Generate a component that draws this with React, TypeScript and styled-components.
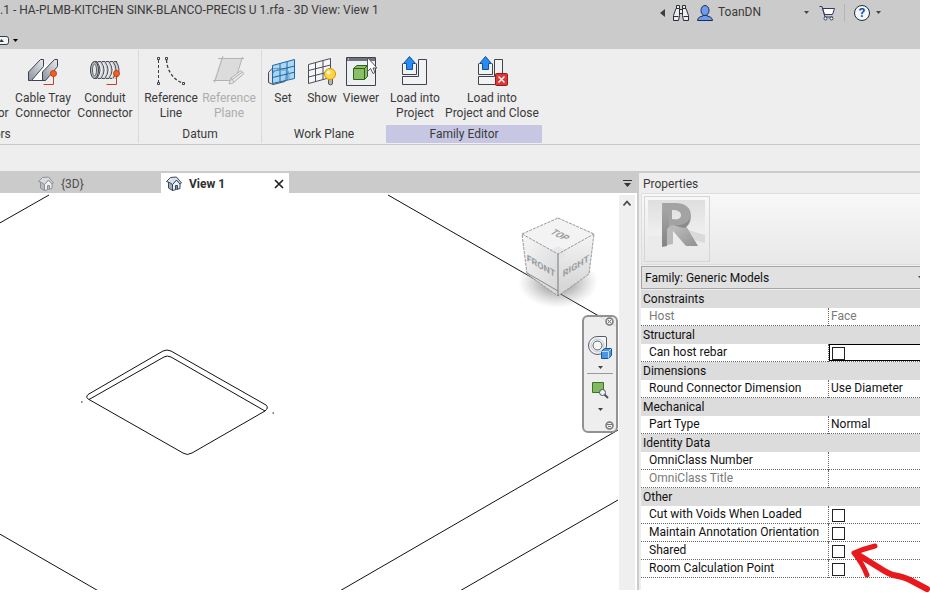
import React from 'react';
import styled, { createGlobalStyle, css } from 'styled-components';

const GlobalStyle = createGlobalStyle`
  *, *::before, *::after { box-sizing: border-box; }
  body { margin: 0; background: #fff; }
  button, input, select { font: inherit; color: inherit; }
  svg { display: block; flex: none; }
`;

/* ---------- shell ---------- */

const Shell = styled.div`
  position: relative;
  display: flex;
  flex-direction: column;
  min-height: 100vh;
  padding: 0 10px 3px 0;
  overflow: hidden;
  font: 12px/15px Roboto, "Segoe UI", sans-serif;
  color: #3a3a3a;
`;

const PlainButton = styled.button`
  display: flex;
  align-items: center;
  padding: 0;
  border: 0;
  background: none;
`;

/* ---------- title bar ---------- */

const TitleBar = styled.header`
  display: flex;
  flex-direction: column;
  background: #cbcbcb;
`;

const TitleRow = styled.div`
  display: flex;
  align-items: center;
  justify-content: space-between;
  height: 25px;
  padding-right: 39px;
`;

const WindowTitle = styled.h1`
  margin: 0;
  padding-bottom: 4px;
  font-size: 12px;
  font-weight: 400;
  white-space: nowrap;
`;

const AccountTools = styled.div`
  display: flex;
  align-items: center;
  height: 24px;
`;

const AccountButton = styled(PlainButton)`
  gap: 6px;
  margin-left: 8px;
  white-space: nowrap;
`;

const UserMenu = styled(AccountButton)`
  width: 112px;
  margin-right: 2px;
  justify-content: space-between;
`;

const UserName = styled.span`
  display: flex;
  align-items: center;
  gap: 5px;
`;

const Separator = styled.span`
  width: 1px;
  height: 18px;
  margin: 0 1px 0 8px;
  background: #b5b5b5;
`;

const QuickAccessRow = styled.div`
  display: flex;
  align-items: center;
  gap: 4px;
  height: 24px;
  padding-top: 6px;
`;

/* ---------- ribbon ---------- */

const Ribbon = styled.nav`
  display: flex;
  height: 96px;
  padding: 1px 0;
  background: #eeeeee;
  border-bottom: 1px solid #c8c8c8;
`;

const RibbonPanel = styled.section<{ $width: number; $divided?: boolean; $clipped?: boolean }>`
  display: flex;
  flex: none;
  flex-direction: column;
  justify-content: space-between;
  width: ${(p) => p.$width}px;
  ${(p) => p.$divided && css`border-right: 1px solid #d9d9d9;`}
  ${(p) => p.$clipped && css`margin-left: -178px;`}
`;

const RibbonTools = styled.div<{ $align?: string; $inset?: number }>`
  display: flex;
  justify-content: ${(p) => p.$align ?? 'center'};
  padding: 6px ${(p) => p.$inset ?? 0}px 0 0;
`;

const RibbonButton = styled.button<{ $width: number }>`
  display: flex;
  flex-direction: column;
  align-items: center;
  gap: 3px;
  width: ${(p) => p.$width}px;
  padding: 0;
  border: 0;
  background: none;
  line-height: 15px;
  white-space: nowrap;

  &:disabled { color: #adadad; }
`;

const PanelTitle = styled.h2<{ $accent?: boolean }>`
  margin: 0;
  height: 18px;
  font-size: 12px;
  font-weight: 400;
  line-height: 18px;
  text-align: center;
  background: ${(p) => (p.$accent ? '#c7c7e4' : 'transparent')};
`;

const OptionsBar = styled.div`
  height: 26px;
  background: #eeeeee;
`;

/* ---------- workspace ---------- */

const Workspace = styled.main`
  display: flex;
  flex: 1;
  background: #cbcbcb;
`;

const DocumentPane = styled.section`
  display: flex;
  flex: 1;
  flex-direction: column;
  min-width: 0;
`;

const TabStrip = styled.div`
  display: flex;
  align-items: flex-end;
  height: 22px;
  padding-right: 5px;
`;

const ViewTab = styled.div<{ $active?: boolean; $width: number }>`
  display: flex;
  align-items: center;
  width: ${(p) => p.$width}px;
  height: 20px;
  padding: 2px 5px 0 ${(p) => (p.$active ? 5 : 38)}px;
  background: ${(p) => (p.$active ? '#fff' : 'transparent')};
  color: ${(p) => (p.$active ? '#303030' : '#505050')};
  font-weight: ${(p) => (p.$active ? 700 : 400)};
`;

const TabButton = styled(PlainButton)`
  flex: 1;
  gap: 7px;
`;

const TabMenu = styled(PlainButton)`
  height: 20px;
  margin-left: auto;
`;

const CanvasArea = styled.div`
  position: relative;
  display: flex;
  flex: 1;
  background: #fff;
`;

const Drawing = styled.svg`
  flex: 1;
  min-width: 0;
  height: auto;
  align-self: stretch;
`;

const ScrollTrack = styled.div`
  width: 16px;
  margin: 2px 2px 0 0;
  padding: 5px 3px;
  background: #efefef;
`;

const CubeOverlay = styled.div`
  position: absolute;
  top: 19px;
  right: 37px;
`;

const NavigationBar = styled.div`
  position: absolute;
  top: 122px;
  right: 19px;
  display: flex;
  flex-direction: column;
  align-items: center;
  width: 36px;
  height: 118px;
  padding: 19px 0 0;
  border: 2px solid #929292;
  border-radius: 6px;
  background: rgba(236, 236, 236, 0.9);
`;

const NavCorner = styled(PlainButton)<{ $bottom?: boolean }>`
  position: absolute;
  right: 2px;
  ${(p) => (p.$bottom ? 'bottom: 1px;' : 'top: 0;')}
`;

const NavButton = styled(PlainButton)<{ $gap: number }>`
  flex-direction: column;
  gap: ${(p) => p.$gap}px;
`;

const NavRule = styled.hr`
  width: 26px;
  height: 1px;
  margin: 4px 0 8px;
  border: 0;
  background: #999;
`;

/* ---------- properties ---------- */

const PropertiesPane = styled.aside`
  flex: 0 0 281px;
  margin: 2px 0 0 2px;
  padding-left: 2px;
  overflow: hidden;
  background: #eeeeee;
`;

const PaneTitle = styled.h2`
  margin: 0;
  padding: 2px 0 0 2px;
  font-size: 12px;
  font-weight: 400;
  line-height: 18px;
`;

const TypePreview = styled.div`
  height: 72px;
  padding: 2px;
  border: 1px solid #dedede;
  border-right: 0;
  background: linear-gradient(#f8f8f8, #e8e8e8);
`;

const Thumbnail = styled.div`
  width: 66px;
  height: 66px;
  border: 1px solid #d6d6d6;
`;

const FamilyPicker = styled.div`
  position: relative;
  margin: 1px 0;
  border: 1px solid #a6a6a6;
  border-right: 0;
  background: #e1e1e1;
`;

const FamilySelect = styled.select`
  display: block;
  width: 100%;
  height: 21px;
  padding: 2px 3px 0;
  border: 0;
  appearance: none;
  background: none;
  color: #111;
`;

const PickerArrow = styled.svg`
  position: absolute;
  top: 9px;
  right: -5px;
`;

const PropertyGrid = styled.div`
  height: 100%;
  background: #fff;
`;

const Table = styled.table`
  width: 100%;
  table-layout: fixed;
  border-spacing: 0;
  color: #111;
  line-height: 17px;
`;

const NameColumn = styled.col`
  width: 187px;
`;

const GroupCell = styled.th`
  height: 18px;
  padding: 0 2px;
  background: #dcdcdc;
  font-weight: 400;
  text-align: left;
`;

const dottedBottom = css`
  height: 18px;
  border-bottom: 1px dotted #666;
`;

const NameCell = styled.th<{ $muted?: boolean }>`
  ${dottedBottom}
  padding: 0 0 0 8px;
  color: ${(p) => (p.$muted ? '#7a7a7a' : 'inherit')};
  font-weight: 400;
  text-align: left;
  white-space: nowrap;
`;

const ValueCell = styled.td<{ $muted?: boolean }>`
  ${dottedBottom}
  padding: 0;
  border-left: 1px dotted #666;
  color: ${(p) => (p.$muted ? '#7a7a7a' : 'inherit')};
`;

const ValueBox = styled.div<{ $selected?: boolean }>`
  display: flex;
  align-items: flex-end;
  height: 17px;
  padding: ${(p) => (p.$selected ? '0 2px' : '0 3px 1px')};
  border: ${(p) => (p.$selected ? '1px solid #000' : '0')};
  border-right: 0;
`;

const ValueText = styled.span`
  padding-left: 2px;
`;

const Check = styled.input`
  appearance: none;
  width: 13px;
  height: 13px;
  margin: 0;
  border: 1px solid #222;
  background: #fff;

  &:checked { background: #444; box-shadow: inset 0 0 0 2px #fff; }
`;

const MarkupArrow = styled.svg`
  position: absolute;
  right: 0;
  bottom: 0;
  pointer-events: none;
`;

/* ---------- icons ---------- */

const Caret = ({ color = '#444' }: { color?: string }) => (
  <svg width="5" height="3" viewBox="0 0 5 3"><path d="M0 0h5L2.500 3z" fill={color} /></svg>
);

const CableTrayIcon = () => (
  <svg width="32" height="32" viewBox="0 0 32 32">
    <defs>
      <linearGradient id="steel" x1="0" x2="1" y1="1" y2="0"><stop stopColor="#8b929c" /><stop offset="1" stopColor="#e8ebef" /></linearGradient>
    </defs>
    <path d="M4 24h15l8-9-6-6-7-1z" fill="#fff" />
    <path d="M1.500 16 13.500 3.500h3v7L4.500 24.500h-3z" fill="url(#steel)" stroke="#3d434d" />
    <path d="M4.500 24.500h14" stroke="#3d434d" fill="none" />
    <path d="M15.500 16 27.500 3.500h3v7L18.500 24.500h-3z" fill="url(#steel)" stroke="#3d434d" />
    <path d="M26.500 18v10.500h-10" stroke="#c0402c" fill="none" />
    <circle cx="26.500" cy="17.500" r="3" fill="#f2601f" stroke="#c23b12" />
  </svg>
);

const ConduitIcon = () => (
  <svg width="32" height="32" viewBox="0 0 32 32">
    <path d="M5 5.500h23c3 0 3 17 0 17H5z" fill="#cfd2d6" />
    {[9, 13, 17, 21, 25, 28].map((x) => (
      <path key={x} d={`M${x - 1} 5.500q6 8.500 0 17`} fill="none" stroke="#4c5058" />
    ))}
    {[11, 15, 19, 23].map((x) => (
      <path key={x} d={`M${x - 1} 7q5 7 0 14`} fill="none" stroke="#fafafa" />
    ))}
    <path d="M5 5.500h23M5 22.500h18" stroke="#4c5058" strokeDasharray="3 1" />
    <ellipse cx="5.500" cy="14" rx="4" ry="8.500" fill="#b7bbc1" stroke="#3d434d" />
    <ellipse cx="5.500" cy="14" rx="2" ry="6" fill="#e5e7ea" stroke="#5a6069" />
    <path d="M27.500 18v10.500h-10" stroke="#c0402c" fill="none" />
    <circle cx="27.500" cy="17.500" r="3" fill="#f2601f" stroke="#c23b12" />
  </svg>
);

const ReferenceLineIcon = () => (
  <svg width="32" height="32" viewBox="0 0 32 32" fill="none" stroke="#3a3d44">
    <path d="M3.500 4v22" strokeDasharray="3 2" />
    <path d="M11.500 4C12 14 18 24 28 27" strokeDasharray="3 2" strokeWidth="1.300" />
    <g fill="#fff">
      <path d="M2.500 1.500h2v2h-2zM2.500 26.500h2v2h-2zM10.500 1.500h2v2h-2zM27.500 26.500h2v2h-2z" />
    </g>
  </svg>
);

const ReferencePlaneIcon = () => (
  <svg width="32" height="32" viewBox="0 0 32 32" fill="none" stroke="#b2b2b2">
    <path d="M8 2.500h21l-7 22H1z" fill="#dcdcdc" stroke="none" />
    <path d="M5 2.500h26M10 0 1.500 26.500M29.500 1l-5 16M0 24.500h18" />
    <path d="m16 28 2-6L28 14.500l3 3L20 27z" fill="#e8e8e8" />
    <path d="m18 22 3 4M18.500 24l11-8" />
  </svg>
);

const planeGrid = 'M5.500 9.500 27.500 3.500v19l-22 5zM13 7.500v18.200M20 5.500v18.600M5.500 15.500l22-5.500M5.500 21.500l22-5.300';

const SetPlaneIcon = () => (
  <svg width="32" height="32" viewBox="0 0 32 32">
    <path d="M1.500 16.500 5 12.500h15l-2 13-12 3-4.500-2z" fill="#dfe3e8" stroke="#464c56" />
    <path d={planeGrid} fill="#8fcbf0" fillOpacity=".65" stroke="#1368b3" />
    <path d="M6 18q0-4 4-4h8q4 0 4 4v6" fill="none" stroke="#6a9cc4" />
  </svg>
);

const ShowPlaneIcon = () => (
  <svg width="32" height="32" viewBox="0 0 32 32">
    <path d="M2.500 8.500 24.500 2.500v19l-22 6zM9.500 6.700v18.800M17 4.700v18.800M2.500 14.500l22-5.500M2.500 21l22-5.500" fill="#f5f6f7" stroke="#484d57" />
    <path d="M22.500 22h4v6q-2 2-4 0z" fill="#aeb3ba" stroke="#555a62" />
    <circle cx="24" cy="18" r="5.500" fill="#ffd640" stroke="#d99213" />
    <circle cx="22.500" cy="16.500" r="2" fill="#fffbd4" />
  </svg>
);

const ViewerIcon = () => (
  <svg width="32" height="32" viewBox="0 0 32 32">
    <path d="M1.500 1.500h29v28h-29z" fill="#edeff2" stroke="#3e434c" />
    <path d="M2 2h28v3H2z" fill="#6d727c" />
    <path d="M3 3h1" stroke="#fff" />
    <path d="M8.500 12.500 12 9.500h10.500v11l-3 3h-11z" fill="#8dbd69" stroke="#276415" />
    <path d="M8.500 12.500h11v11M19.500 12.500l3-3" fill="none" stroke="#276415" />
    <path d="M22.500 1.500v14l3-3 2.500 5 2-1-2-4.500h4z" fill="#fff" stroke="#555" />
  </svg>
);

const LoadArt = () => (
  <>
    <path d="M2.500 7.500v11h14v-11M2.500 20.500h16v-17h8v25h-24z" fill="#f0f2f4" stroke="#3e434c" />
    <path d="M9.500.500 15.500 7.500h-3v6h-6v-6h-3z" fill="#2a8cf0" stroke="#0e4f9f" />
  </>
);

const LoadIcon = () => <svg width="30" height="32" viewBox="0 0 30 32"><LoadArt /></svg>;

const LoadCloseIcon = () => (
  <svg width="32" height="32" viewBox="0 0 32 32">
    <LoadArt />
    <rect x="19.500" y="17.500" width="12" height="12" rx="1" fill="#d93a38" stroke="#9c1717" />
    <path d="m22.500 20.500 6 6m0-6-6 6" stroke="#fff" strokeWidth="1.400" />
  </svg>
);

const BinocularsIcon = () => (
  <svg width="16" height="16" viewBox="0 0 16 16" fill="#eceef0" stroke="#2b2e33">
    <path d="M3.500.500h3v3h-3zM9.500.500h3v3h-3zM6.500 4.500h3v4h-3z" />
    <path d="M3 3.500h3.500v7l-1 5h-5v-5zM13 3.500H9.500v7l1 5h5v-5z" />
    <path d="M.500 11.500h5M10.500 11.500h5" />
  </svg>
);

const UserIcon = () => (
  <svg width="16" height="16" viewBox="0 0 16 16" fill="#6f9bef" stroke="#1e2c52">
    <path d="M.500 15.500c0-3 3-4 5.500-4.500v-1h4v1c2.500.500 5.500 1.500 5.500 4.500z" />
    <ellipse cx="8" cy="5.500" rx="4" ry="5" />
  </svg>
);

const CartIcon = () => (
  <svg width="17" height="16" viewBox="0 0 17 16" fill="none" stroke="#303a66">
    <path d="M3.500 3.500h12l-2 6h-8z" fill="#fff" />
    <path d="M.500 1.500h2.500l3 10.500h8" />
    <circle cx="6.500" cy="13.500" r="1.500" fill="#fff" />
    <circle cx="12.500" cy="13.500" r="1.500" fill="#fff" />
  </svg>
);

const HelpMark = styled.span`
  display: flex;
  align-items: center;
  justify-content: center;
  width: 16px;
  height: 16px;
  border: 1px solid #222b3a;
  border-radius: 50%;
  background: #f4f7fb;
  color: #1b4fb0;
  font-size: 13px;
  font-weight: 700;
  line-height: 14px;
`;

const HouseIcon = ({ faded = false }: { faded?: boolean }) => (
  <svg width="16" height="16" viewBox="0 0 16 16" fill="#eef1f4" stroke={faded ? '#8d8f92' : '#3b4656'}>
    <path d="M2.500 6v6l4 2.500V7z" fill={faded ? '#b9bbbf' : '#9fb0c3'} />
    <path d="M6.500 14.500V8l4-4 3.500 4v4.500z" />
    <path d="m.500 5.500 4-4 6-.500 5 6-1.500 1-3.500-4-4 4.500-3-2z" fill={faded ? '#d9dadc' : '#dbe3ea'} />
    <path d="M9.500 13.500V9.500h2v4" fill={faded ? '#bbb' : '#8797aa'} />
  </svg>
);

const CrossIcon = () => (
  <svg width="10" height="10" viewBox="0 0 10 10"><path d="m1 1 8 8M9 1 1 9" stroke="#222" strokeWidth="1.700" /></svg>
);

const CubeIcon = () => (
  <svg width="84" height="102" viewBox="0 0 84 102">
    <defs>
      <radialGradient id="cubeShadow"><stop offset=".4" stopColor="#888" stopOpacity=".6" /><stop offset="1" stopColor="#aaa" stopOpacity="0" /></radialGradient>
      <linearGradient id="cubeFront" x2="1" y2="1"><stop stopColor="#f7f7f7" /><stop offset="1" stopColor="#d6d6d6" /></linearGradient>
      <linearGradient id="cubeSide" x2="0" y2="1"><stop stopColor="#f5f5f5" /><stop offset="1" stopColor="#d2d2d2" /></linearGradient>
    </defs>
    <ellipse cx="42" cy="70" rx="40" ry="26" fill="url(#cubeShadow)" />
    <path d="M42 6 78 22 42 42 6 22z" fill="#f3f3f3" />
    <path d="m6 22 36 20v42L11 62z" fill="url(#cubeFront)" />
    <path d="M78 22 42 42v42l31-22z" fill="url(#cubeSide)" />
    <path d="m35 38 7-4 7 4v7l-7 4-7-4z" fill="#dfe3e8" fillOpacity=".7" />
    <path d="M42 6 78 22 73 62 42 84 11 62 6 22zM6 22l36 20 36-20" fill="none" stroke="#999" strokeDasharray="3 1" />
    <path d="M42 42v42" stroke="#777" />
    <path d="M11 61 42 79" stroke="#888" />
    <g fill="#999ca0" fontFamily="Roboto, sans-serif" fontSize="9" fontWeight="700" textAnchor="middle">
      <text transform="translate(41 25) rotate(27) skewX(-30)">TOP</text>
      <text transform="translate(25 57) skewY(30)">FRONT</text>
      <text transform="translate(60 57) skewY(-32)">RIGHT</text>
    </g>
  </svg>
);

const WheelIcon = () => (
  <svg width="24" height="24" viewBox="0 0 24 24" fill="#f4f5f7" stroke="#545b67">
    <path d="M10 .500h7q1.500 0 1.500 1.500v8a9 9 0 1 1-8.500-9.500z" />
    <circle cx="9.500" cy="9.500" r="4.500" />
    <circle cx="9.500" cy="9.500" r="6.500" fill="none" stroke="#c4c8ce" />
    <path d="m13.500 15.500 3-3h7v7l-3 3h-7z" fill="#4c97e0" stroke="#1c5495" />
    <path d="M13.500 15.500h7v7M20.500 15.500l3-3" fill="none" stroke="#b9dcfa" />
  </svg>
);

const ZoomIcon = () => (
  <svg width="17" height="17" viewBox="0 0 17 17">
    <path d="M.500.500h11v10H.500z" fill="#86b764" stroke="#35761f" />
    <path d="m12.500 12.500 3.500 3.500" stroke="#4b515a" strokeWidth="2" />
    <circle cx="10.500" cy="10.500" r="3" fill="#eef2f5" stroke="#4b515a" />
  </svg>
);

const LogoR = () => (
  <svg width="64" height="64" viewBox="0 0 64 64">
    <defs>
      <linearGradient id="rBack" x2="0" y2="1"><stop stopColor="#dedede" /><stop offset="1" stopColor="#f0f0f0" /></linearGradient>
      <linearGradient id="rStem" x2="0" y2="1"><stop stopColor="#aaa" /><stop offset="1" stopColor="#848484" /></linearGradient>
      <linearGradient id="rLeg" x2="1" y2="1"><stop stopColor="#c0c0c0" /><stop offset="1" stopColor="#909090" /></linearGradient>
    </defs>
    <path d="M3 3h57v36L3 38z" fill="url(#rBack)" />
    <path d="M3 38 60 42v18H3z" fill="#ebebeb" />
    <path d="m31 38 29 8v-8L40 32z" fill="#dadada" />
    <path fillRule="evenodd" d="M17 6h13c12 0 16 6 16 13 0 6-2 9-5 11L30 32l-8 2V49l-5-1zM27 13v9c7 1 9-1 9-4s-3-5-9-5z" fill="#a3a3a3" />
    <path d="M17 6 23 13 24 28l-2 21-5 1z" fill="url(#rStem)" />
    <path d="m22 32 4-4 2 4v15l-6 1z" fill="#bababa" />
    <path d="m27 28 14 1 12 20H41L28 34z" fill="url(#rLeg)" />
    <path d="M27 28c9 1 16-1 18-8-1 7-3 9-4 10l-2 1z" fill="#8b8b8b" />
  </svg>
);

/* ---------- data ---------- */

type Property = { name: string; value?: string; check?: boolean; muted?: boolean; selected?: boolean };

const groups: { title: string; rows: Property[] }[] = [
  { title: 'Constraints', rows: [{ name: 'Host', value: 'Face', muted: true }] },
  { title: 'Structural', rows: [{ name: 'Can host rebar', check: true, selected: true }] },
  { title: 'Dimensions', rows: [{ name: 'Round Connector Dimension', value: 'Use Diameter' }] },
  { title: 'Mechanical', rows: [{ name: 'Part Type', value: 'Normal' }] },
  { title: 'Identity Data', rows: [{ name: 'OmniClass Number' }, { name: 'OmniClass Title', muted: true }] },
  {
    title: 'Other',
    rows: [
      { name: 'Cut with Voids When Loaded', check: true },
      { name: 'Maintain Annotation Orientation', check: true },
      { name: 'Shared', check: true },
      { name: 'Room Calculation Point', check: true },
    ],
  },
];

type ToolProps = { width: number; icon: React.ReactNode; lines: string[]; disabled?: boolean };

const Tool = ({ width, icon, lines, disabled }: ToolProps) => (
  <RibbonButton type="button" $width={width} disabled={disabled}>
    {icon}
    <span>{lines.map((line, i) => <React.Fragment key={line}>{i > 0 && <br />}{line}</React.Fragment>)}</span>
  </RibbonButton>
);

const PropertyRow = ({ name, value, check, muted, selected }: Property) => {
  const id = name.toLowerCase().replace(/ /g, '-');
  return (
    <tr>
      <NameCell scope="row" $muted={muted}>{check ? <label htmlFor={id}>{name}</label> : name}</NameCell>
      <ValueCell $muted={muted}>
        {check ? (
          <ValueBox $selected={selected}><Check type="checkbox" id={id} /></ValueBox>
        ) : (
          <ValueText>{value}</ValueText>
        )}
      </ValueCell>
    </tr>
  );
};

export default function App() {
  return (
    <Shell>
      <GlobalStyle />
      <TitleBar>
        <TitleRow>
          <WindowTitle>.1 - HA-PLMB-KITCHEN SINK-BLANCO-PRECIS U 1.rfa - 3D View: View 1</WindowTitle>
          <AccountTools>
            <PlainButton type="button" aria-label="Collapse search">
              <svg width="5" height="8" viewBox="0 0 5 8"><path d="M5 0v8L0 4z" fill="#3d3d3d" /></svg>
            </PlainButton>
            <AccountButton type="button" aria-label="Search"><BinocularsIcon /></AccountButton>
            <UserMenu type="button"><UserName><UserIcon />ToanDN</UserName><Caret /></UserMenu>
            <AccountButton type="button" aria-label="App store"><CartIcon /></AccountButton>
            <Separator />
            <AccountButton type="button" aria-label="Help"><HelpMark>?</HelpMark><Caret /></AccountButton>
          </AccountTools>
        </TitleRow>
        <QuickAccessRow>
          <PlainButton type="button" aria-label="Minimize ribbon">
            <svg width="9" height="9" viewBox="0 0 9 9">
              <path d="M-3 .500h9q2.500 0 2.500 2v4q0 2-2.500 2h-9z" fill="#f2f4f6" stroke="#333b45" />
              <path d="m-1 6 2.500-3L4 6z" fill="#333b45" />
            </svg>
          </PlainButton>
          <PlainButton type="button" aria-label="Customize quick access"><Caret color="#000" /></PlainButton>
        </QuickAccessRow>
      </TitleBar>

      <Ribbon>
        <RibbonPanel $width={317} $divided $clipped>
          <RibbonTools $align="flex-end" $inset={2}>
            <Tool width={62} icon={<ConduitIcon />} lines={['\u00a0', 'Connector']} />
            <Tool width={62} icon={<CableTrayIcon />} lines={['Cable Tray', 'Connector']} />
            <Tool width={62} icon={<ConduitIcon />} lines={['Conduit', 'Connector']} />
          </RibbonTools>
          <PanelTitle>Connectors</PanelTitle>
        </RibbonPanel>
        <RibbonPanel $width={123} $divided>
          <RibbonTools>
            <Tool width={58} icon={<ReferenceLineIcon />} lines={['Reference', 'Line']} />
            <Tool width={58} icon={<ReferencePlaneIcon />} lines={['Reference', 'Plane']} disabled />
          </RibbonTools>
          <PanelTitle>Datum</PanelTitle>
        </RibbonPanel>
        <RibbonPanel $width={124}>
          <RibbonTools $inset={4}>
            <Tool width={39} icon={<SetPlaneIcon />} lines={['Set']} />
            <Tool width={39} icon={<ShowPlaneIcon />} lines={['Show']} />
            <Tool width={39} icon={<ViewerIcon />} lines={['Viewer']} />
          </RibbonTools>
          <PanelTitle>Work Plane</PanelTitle>
        </RibbonPanel>
        <RibbonPanel $width={156}>
          <RibbonTools>
            <Tool width={56} icon={<LoadIcon />} lines={['Load into', 'Project']} />
            <Tool width={98} icon={<LoadCloseIcon />} lines={['Load into', 'Project and Close']} />
          </RibbonTools>
          <PanelTitle $accent>Family Editor</PanelTitle>
        </RibbonPanel>
      </Ribbon>
      <OptionsBar />

      <Workspace>
        <DocumentPane>
          <TabStrip>
            <ViewTab $width={161}><TabButton type="button"><HouseIcon faded />{'{3D}'}</TabButton></ViewTab>
            <ViewTab $width={128} $active>
              <TabButton type="button"><HouseIcon />View 1</TabButton>
              <PlainButton type="button" aria-label="Close view"><CrossIcon /></PlainButton>
            </ViewTab>
            <TabMenu type="button" aria-label="List views">
              <svg width="9" height="7" viewBox="0 0 9 7"><path d="M0 0h9v1H0zM1 3h7L4.500 7z" fill="#333" /></svg>
            </TabMenu>
          </TabStrip>
          <CanvasArea>
            <Drawing fill="none" stroke="#111">
              <path d="M-2 31 49 2M388 2l230 132M-2 340l104 60M338 399l280-162M458 399l160-92" />
              <path d="M89 206.500q-4-2-1-5L163 158q4-2 8 0L266 212q3 3-1 6L192 260q-5 3-9 0z" />
              <path d="M89 206.500 164 164q3-2 7 0l94 54" />
              <path d="M81 209h1.500M272.500 220h1.500" />
            </Drawing>
            <ScrollTrack>
              <svg width="10" height="7" viewBox="0 0 10 7"><path d="m1.500 5.500 3.500-4 3.500 4" fill="none" stroke="#444" strokeWidth="1.700" /></svg>
            </ScrollTrack>
            <CubeOverlay><CubeIcon /></CubeOverlay>
            <NavigationBar>
              <NavCorner type="button" aria-label="Close navigation bar">
                <svg width="9" height="9" viewBox="0 0 9 9" fill="none" stroke="#777"><circle cx="4.500" cy="4.500" r="3.500" strokeWidth="1.500" /><path d="m3 3 3 3M6 3 3 6" /></svg>
              </NavCorner>
              <NavButton type="button" aria-label="Steering wheel" $gap={6}><WheelIcon /><Caret /></NavButton>
              <NavRule />
              <NavButton type="button" aria-label="Zoom region" $gap={9}><ZoomIcon /><Caret /></NavButton>
              <NavCorner type="button" aria-label="Customize navigation bar" $bottom>
                <svg width="9" height="9" viewBox="0 0 9 9" fill="none" stroke="#777"><circle cx="4.500" cy="4.500" r="3.500" strokeWidth="1.500" /><path d="M2 3.500h5M3 5.500h3" /></svg>
              </NavCorner>
            </NavigationBar>
          </CanvasArea>
        </DocumentPane>

        <PropertiesPane>
          <PaneTitle>Properties</PaneTitle>
          <TypePreview><Thumbnail><LogoR /></Thumbnail></TypePreview>
          <FamilyPicker>
            <FamilySelect aria-label="Family"><option>Family: Generic Models</option></FamilySelect>
            <PickerArrow width="7" height="4" viewBox="0 0 7 4"><path d="M0 0h7L3.500 4z" fill="#444" /></PickerArrow>
          </FamilyPicker>
          <PropertyGrid>
            <Table>
              <colgroup><NameColumn /><col /></colgroup>
              {groups.map((group) => (
                <tbody key={group.title}>
                  <tr><GroupCell colSpan={2} scope="rowgroup">{group.title}</GroupCell></tr>
                  {group.rows.map((row) => <PropertyRow key={row.name} {...row} />)}
                </tbody>
              ))}
            </Table>
          </PropertyGrid>
        </PropertiesPane>
      </Workspace>

      <MarkupArrow width="82" height="54" viewBox="0 0 82 54" fill="none" stroke="#e8191c" strokeLinecap="round" strokeLinejoin="round" aria-hidden="true">
        <path d="M27 7C19 9 13 11 6 14c5 6 9 12 13 22" strokeWidth="5" />
        <path d="M9 15 30 28c5 3 9 6 15 8 6 1 11 2 17 5l17 9" strokeWidth="6" />
      </MarkupArrow>
    </Shell>
  );
}
